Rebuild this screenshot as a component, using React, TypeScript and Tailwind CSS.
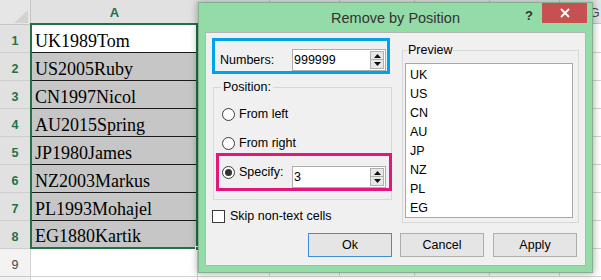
import React from "react";

const names = [
  "UK1989Tom",
  "US2005Ruby",
  "CN1997Nicol",
  "AU2015Spring",
  "JP1980James",
  "NZ2003Markus",
  "PL1993Mohajel",
  "EG1880Kartik",
];
const preview = ["UK", "US", "CN", "AU", "JP", "NZ", "PL", "EG"];
const otherCols = [
  { l: "", w: 72 },
  { l: "", w: 70 },
  { l: "", w: 75 },
  { l: "", w: 75 },
  { l: "", w: 70 },
  { l: "G", w: 70 },
];

function Radio({ checked }: { checked?: boolean }) {
  return (
    <div className="w-[13px] h-[13px] rounded-full border border-[#3a3a3a] bg-white flex items-center justify-center shrink-0">
      {checked && <div className="w-[7px] h-[7px] rounded-full bg-[#333]" />}
    </div>
  );
}

function Spin({ value }: { value: string }) {
  return (
    <div className="w-[94px] h-[22px] bg-white border border-[#abadb3] flex items-center pl-[1px] pr-[1px] shrink-0">
      <span className="flex-1 leading-[18px] text-[12.5px] text-black">{value}</span>
      <div className="w-[14px] h-[18px] flex flex-col">
        <div className="h-[9px] bg-[#e8e8e8] border border-[#b0b0b0] flex items-center justify-center">
          <svg width="7" height="4" viewBox="0 0 7 4">
            <polygon points="3.5,0 7,4 0,4" fill="#111" />
          </svg>
        </div>
        <div className="h-[9px] bg-[#e8e8e8] border border-t-0 border-[#b0b0b0] flex items-center justify-center">
          <svg width="7" height="4" viewBox="0 0 7 4">
            <polygon points="0,0 7,0 3.5,4" fill="#111" />
          </svg>
        </div>
      </div>
    </div>
  );
}

function Btn({ label, def, cls }: { label: string; def?: boolean; cls?: string }) {
  return (
    <div
      className={
        "w-[84px] h-[24px] flex items-center justify-center bg-[#e5e5e5] border text-[12.5px] text-black " +
        (def ? "border-[#3d8ee0] " : "border-[#adadad] ") +
        (cls ?? "")
      }
    >
      {label}
    </div>
  );
}

export default function App() {
  return (
    <div className="relative w-[601px] h-[280px] overflow-hidden bg-white flex items-start font-['Liberation_Sans',Arial,sans-serif]">
      {/* Row header column */}
      <div className="w-[30px] shrink-0 flex flex-col">
        <div className="h-[25px] shrink-0 bg-[#e6e6e6] border-b border-[#c6c6c6] relative">
          <svg className="absolute right-[2px] bottom-[1px]" width="14" height="13" viewBox="0 0 14 13">
            <polygon points="14,0 14,13 0,13" fill="#d2d2d2" />
          </svg>
        </div>
        {names.map((_, i) => (
          <div
            key={i}
            className="h-[28px] shrink-0 bg-[#e1e1e1] border-b border-[#cdcdcd] flex items-end justify-center pb-[3px] text-[12.5px] leading-[16px] font-bold text-[#217346]"
          >
            {i + 1}
          </div>
        ))}
        <div className="h-[28px] shrink-0 bg-[#f3f3f3] border-b border-[#c6c6c6] flex items-end justify-center pb-[3px] text-[12.5px] leading-[16px] text-[#444]">
          9
        </div>
        <div className="h-[28px] shrink-0 bg-[#f3f3f3]" />
      </div>

      {/* Column A */}
      <div className="w-[168px] shrink-0 flex flex-col">
        <div className="h-[23px] shrink-0 bg-[#e1e1e1] border-l border-[#c6c6c6] flex items-center justify-center pt-[3px] text-[13px] font-bold text-[#217346]">
          A
        </div>
        <div className="relative shrink-0 border-2 border-[#217346] flex flex-col">
          {names.map((n, i) => (
            <div
              key={n}
              className={
                "shrink-0 flex items-end pl-[3px] pb-[1px] font-['Liberation_Serif','Times_New_Roman',serif] text-[18px] leading-[20px] text-black " +
                (i === 0 ? "bg-white " : "bg-[#c6c6c6] ") +
                (i < 7 ? "h-[28px] border-b border-[#1c1c1c]" : "h-[26px]")
              }
            >
              {n}
            </div>
          ))}
          <div className="absolute right-[-4px] bottom-[-4px] w-[5px] h-[5px] bg-[#217346] border border-white" />
        </div>
        <div className="h-[28px] shrink-0 border-l border-r border-b border-[#d4d4d4]" />
        <div className="h-[28px] shrink-0 border-l border-r border-[#d4d4d4]" />
      </div>

      {/* Other columns */}
      {otherCols.map((c, k) => (
        <div key={k} style={{ width: c.w }} className="shrink-0 flex flex-col">
          <div className="h-[24px] shrink-0 bg-[#e6e6e6] border-b border-r border-[#c6c6c6] flex items-center justify-center pt-[2px] text-[13px] text-[#444]">
            {c.l}
          </div>
          <div className="h-[29px] shrink-0 border-b border-r border-[#d4d4d4]" />
          {[2, 3, 4, 5, 6, 7, 8, 9].map((r) => (
            <div key={r} className="h-[28px] shrink-0 border-b border-r border-[#d4d4d4]" />
          ))}
        </div>
      ))}

      {/* Dialog */}
      <div className="absolute left-[198px] top-[2px] w-[395px] h-[271px] flex flex-col bg-[#93dba7] border border-[#7fb28d] shadow-[0_0_7px_1px_rgba(0,0,0,0.3)]">
        <div className="relative h-[29px] shrink-0">
          <div className="h-full flex items-center justify-center">
            <span className="text-[14.5px] leading-[18px] text-[#333]">Remove by Position</span>
          </div>
          <span className="absolute left-[326px] top-[5px] text-[13px] leading-[16px] font-bold text-[#333]">?</span>
          <div className="absolute left-[343px] top-0 w-[45px] h-[20px] bg-[#c75050] flex items-center justify-center">
            <svg width="10" height="10" viewBox="0 0 10 10">
              <path d="M1 1 L9 9 M9 1 L1 9" stroke="#fff" strokeWidth="1.8" />
            </svg>
          </div>
        </div>

        <div className="mx-[6px] h-[234px] shrink-0 bg-[#f0f0f0] border border-[#b4b4b4] flex flex-col text-[12.5px] text-black">
          <div className="flex">
            {/* Left column */}
            <div className="ml-[6px] w-[180px] flex flex-col">
              <div className="mt-[5px] w-[178px] h-[36px] shrink-0 border-[3px] border-[#00a2e8] flex items-end pl-[5px]">
                <div className="w-[72px] h-[22px] flex items-center">Numbers:</div>
                <Spin value="999999" />
              </div>

              <div className="relative mt-[13px] ml-[1px] w-[179px] border border-[#d8d8d8] flex flex-col pt-[16px] pb-[8px]">
                <span className="absolute top-[-9px] left-[7px] px-[2px] bg-[#f0f0f0] leading-[16px]">Position:</span>
                <div className="h-[20px] flex items-center pl-[8px]">
                  <Radio />
                  <span className="ml-[4px]">From left</span>
                </div>
                <div className="mt-[9px] h-[20px] flex items-center pl-[8px]">
                  <Radio />
                  <span className="ml-[4px]">From right</span>
                </div>
                <div className="ml-[2px] mr-[-1px] h-[38px] shrink-0 border-[3px] border-[#e4157b] flex items-center pl-[3px]">
                  <Radio checked />
                  <span className="ml-[4px] w-[53px]">Specify:</span>
                  <div className="self-end">
                    <Spin value="3" />
                  </div>
                </div>
              </div>

              <div className="mt-[10px] h-[13px] flex items-center">
                <div className="w-[13px] h-[13px] border border-[#3a3a3a] bg-white shrink-0" />
                <span className="ml-[5px]">Skip non-text cells</span>
              </div>
            </div>

            {/* Right column */}
            <div className="ml-[10px] w-[177px] flex flex-col">
              <div className="relative mt-[17px] h-[173px] shrink-0 border border-[#d8d8d8] flex flex-col">
                <span className="absolute top-[-9px] left-[4px] px-[1px] bg-[#f0f0f0] leading-[16px]">Preview</span>
                <div className="mt-[12px] ml-[2px] w-[168px] h-[155px] shrink-0 bg-white border border-[#a8a8a8] flex flex-col pl-[4px] pt-[2px]">
                  {preview.map((p) => (
                    <div key={p} className="h-[19px] shrink-0 leading-[19px]">
                      {p}
                    </div>
                  ))}
                </div>
              </div>
            </div>
          </div>

          <div className="mt-[10px] flex justify-end pr-[8px]">
            <Btn label="Ok" def />
            <Btn label="Cancel" cls="ml-[8px]" />
            <Btn label="Apply" cls="ml-[9px]" />
          </div>
        </div>
      </div>
    </div>
  );
}
